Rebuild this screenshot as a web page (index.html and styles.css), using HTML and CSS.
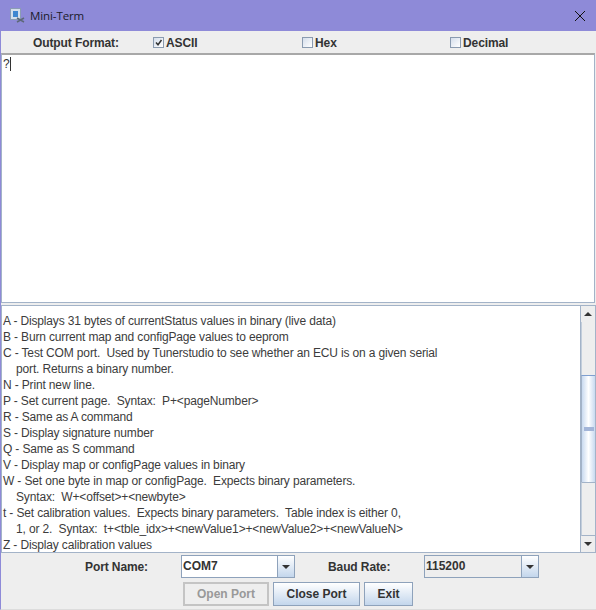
FILE: index.html
```html
<!DOCTYPE html>
<html lang="en">
<head>
  <meta charset="UTF-8" />
  <title>Mini-Term</title>
  <link rel="stylesheet" href="styles.css">
</head>
<body>
  <!-- Title bar -->
  <div class="title-bar">
    <svg class="app-icon" width="15" height="15" viewBox="0 0 15 15">
      <rect x="0.5" y="0.5" width="10" height="11" fill="#d3deeb" stroke="#8b9cb4" />
      <rect x="3" y="3" width="5" height="6" fill="#3f86d0" />
      <path d="M7 10l7 4M14 10l-7 4" stroke="#5d6878" stroke-width="1.5" fill="none" />
    </svg>
    <span class="title-text">Mini-Term</span>
    <svg class="close-icon" width="12" height="12" viewBox="0 0 12 12">
      <path d="M1 1l10 10M11 1L1 11" stroke="#111" stroke-width="1" fill="none" />
    </svg>
  </div>

  <!-- Output format -->
  <div class="format-row">
    <span class="label format-label">Output Format:</span>
    <label class="option ascii">
      <span class="check">
        <svg width="9" height="9" viewBox="0 0 9 9"><path d="M2 4.5l2 2.2L7.5 2" stroke="#333" stroke-width="1.5" fill="none" /></svg>
      </span>ASCII
    </label>
    <label class="option hex"><span class="check"></span>Hex</label>
    <label class="option"><span class="check"></span>Decimal</label>
  </div>

  <!-- Output area -->
  <div class="output"><span class="cursor-text">?</span><span class="cursor"></span></div>

  <!-- Command help -->
  <div class="log-pane">
    <div class="log">
      <div>A - Displays 31 bytes of currentStatus values in binary (live data)</div>
      <div>B - Burn current map and configPage values to eeprom</div>
      <div>C - Test COM port.&nbsp; Used by Tunerstudio to see whether an ECU is on a given serial</div>
      <div class="indent">port. Returns a binary number.</div>
      <div>N - Print new line.</div>
      <div>P - Set current page.&nbsp; Syntax:&nbsp; P+&lt;pageNumber&gt;</div>
      <div>R - Same as A command</div>
      <div>S - Display signature number</div>
      <div>Q - Same as S command</div>
      <div>V - Display map or configPage values in binary</div>
      <div>W - Set one byte in map or configPage.&nbsp; Expects binary parameters.</div>
      <div class="indent">Syntax:&nbsp; W+&lt;offset&gt;+&lt;newbyte&gt;</div>
      <div>t - Set calibration values.&nbsp; Expects binary parameters.&nbsp; Table index is either 0,</div>
      <div class="indent">1, or 2.&nbsp; Syntax:&nbsp; t+&lt;tble_idx&gt;+&lt;newValue1&gt;+&lt;newValue2&gt;+&lt;newValueN&gt;</div>
      <div>Z - Display calibration values</div>
    </div>
    <div class="scrollbar">
      <div class="scroll-btn"><span class="arrow up"></span></div>
      <div class="track track-top"></div>
      <div class="thumb"><span class="grip"></span></div>
      <div class="track track-bottom"></div>
      <div class="scroll-btn"><span class="arrow"></span></div>
    </div>
  </div>

  <!-- Port settings -->
  <div class="port-row">
    <span class="label port-label">Port Name:</span>
    <div class="combo port-combo">
      <span class="combo-value">COM7</span>
      <span class="combo-btn"><span class="arrow"></span></span>
    </div>
    <span class="label baud-label">Baud Rate:</span>
    <div class="combo baud-combo">
      <span class="combo-value">115200</span>
      <span class="combo-btn"><span class="arrow"></span></span>
    </div>
  </div>

  <div class="button-row">
    <button class="btn open" disabled>Open Port</button>
    <button class="btn close">Close Port</button>
    <button class="btn exit">Exit</button>
  </div>
</body>
</html>
```

FILE: styles.css
```css
body {
  margin: 0;
  width: 596px;
  height: 610px;
  overflow: hidden;
  box-sizing: border-box;
  border-left: 1px solid #8e8ad8;
  border-bottom: 1px solid #dcdcdc;
  background-color: #eeeeee;
  font-family: "Liberation Sans", Arial, sans-serif;
  font-size: 12px;
  color: #333;
}

/* Title bar */
.title-bar {
  height: 31px;
  background-color: #8e8ad8;
  display: flex;
  align-items: center;
  padding: 0 10px 0 9px;
  box-sizing: border-box;
}
.app-icon {
  margin-right: 5px;
}
.title-text {
  flex: 1;
  font-family: "Open Sans", sans-serif;
  font-size: 11.5px;
  letter-spacing: -0.1px;
  color: #1a1a2a;
}

/* Format row */
.format-row {
  height: 22px;
  display: flex;
  align-items: center;
  padding: 1px 0 0 32px;
  box-sizing: border-box;
}
.label,
.option {
  font-weight: bold;
  letter-spacing: -0.1px;
  color: #333;
}
.format-label {
  width: 120px;
}
.option {
  display: flex;
  align-items: center;
}
.ascii {
  width: 149px;
}
.hex {
  width: 148px;
}
.check {
  width: 9px;
  height: 9px;
  margin-right: 2px;
  border: 1px solid #8a9bb0;
  background: linear-gradient(135deg, #d5deeb, #ffffff);
  display: flex;
}

/* Output */
.output {
  height: 250px;
  margin-right: 1px;
  background: #fff;
  border-top: 2px solid #a8a8a8;
  border-left: 1px solid #a3b3c8;
  border-right: 1px solid #a3b3c8;
  border-bottom: 1px solid #a3b3c8;
  box-sizing: border-box;
  padding: 2px 1px;
  line-height: 14px;
  display: flex;
  align-items: flex-start;
}
.cursor {
  width: 1px;
  height: 14px;
  background: #333;
}

/* Help text */
.log-pane {
  height: 248px;
  margin-top: 2px;
  display: flex;
  background: #fff;
  border-top: 1px solid #a3b3c8;
  border-bottom: 1px solid #a3b3c8;
  border-left: 1px solid #a3b3c8;
  box-sizing: border-box;
}
.log {
  flex: 1;
  padding-top: 7px;
  padding-left: 1px;
  line-height: 16px;
  letter-spacing: -0.15px;
  white-space: nowrap;
  overflow: hidden;
  color: #3c3c3c;
}
.indent {
  padding-left: 13px;
}

/* Scrollbar */
.scrollbar {
  width: 16px;
  display: flex;
  flex-direction: column;
  border-left: 1px solid #a3b3c8;
  border-right: 1px solid #a3b3c8;
  box-sizing: border-box;
}
.scroll-btn {
  height: 16px;
  background: #eeeeee;
  display: flex;
  align-items: center;
  justify-content: center;
}
.track {
  background: #eeeeee;
  border-left: 1px solid #c3cedb;
}
.track-top {
  height: 53px;
}
.track-bottom {
  flex: 1;
  border-top: 1px solid #a3b3c8;
  border-bottom: 1px solid #a3b3c8;
}
.thumb {
  height: 107px;
  border-top: 1px solid #7f9fd0;
  border-left: 1px solid #a3b3c8;
  box-sizing: border-box;
  background: linear-gradient(90deg, #c9daf0, #ffffff 50%, #c9daf0);
  display: flex;
  align-items: center;
  justify-content: center;
}
.grip {
  width: 10px;
  height: 4px;
  background: #a3b5d8;
}
.arrow {
  width: 0;
  height: 0;
  border-left: 4px solid transparent;
  border-right: 4px solid transparent;
  border-top: 4px solid #333;
}
.arrow.up {
  border-top: 0;
  border-bottom: 4px solid #333;
}

/* Port row */
.port-row {
  height: 29px;
  padding: 2px 0 4px;
  box-sizing: border-box;
  display: flex;
  align-items: center;
  font-weight: bold;
}
.port-label {
  margin-left: 84px;
  width: 96px;
}
.combo {
  height: 23px;
  display: flex;
  border: 1px solid #8ea2bb;
  box-sizing: border-box;
}
.combo-value {
  flex: 1;
  padding-left: 1px;
  line-height: 20px;
}
.combo-btn {
  width: 16px;
  border-left: 1px solid #8ea2bb;
  background: linear-gradient(180deg, #ffffff, #c3d6ec);
  display: flex;
  align-items: center;
  justify-content: center;
}
.port-combo {
  width: 114px;
  background: #fff;
}
.baud-label {
  margin-left: 33px;
  width: 96px;
}
.baud-combo {
  width: 115px;
  background: #eeeeee;
}

/* Buttons */
.button-row {
  display: flex;
  justify-content: center;
  gap: 4px;
  padding-right: 1px;
}
.btn {
  height: 24px;
  padding: 0;
  font-family: "Liberation Sans", Arial, sans-serif;
  font-size: 12px;
  font-weight: bold;
  color: #333;
  border: 1px solid #8ea2bb;
  background: linear-gradient(180deg, #ffffff, #c3d6ec);
}
.open {
  width: 86px;
  color: #999;
  background: #eeeeee;
  border: 2px solid #c4c4c4;
}
.close {
  width: 87px;
}
.exit {
  width: 49px;
}
```
